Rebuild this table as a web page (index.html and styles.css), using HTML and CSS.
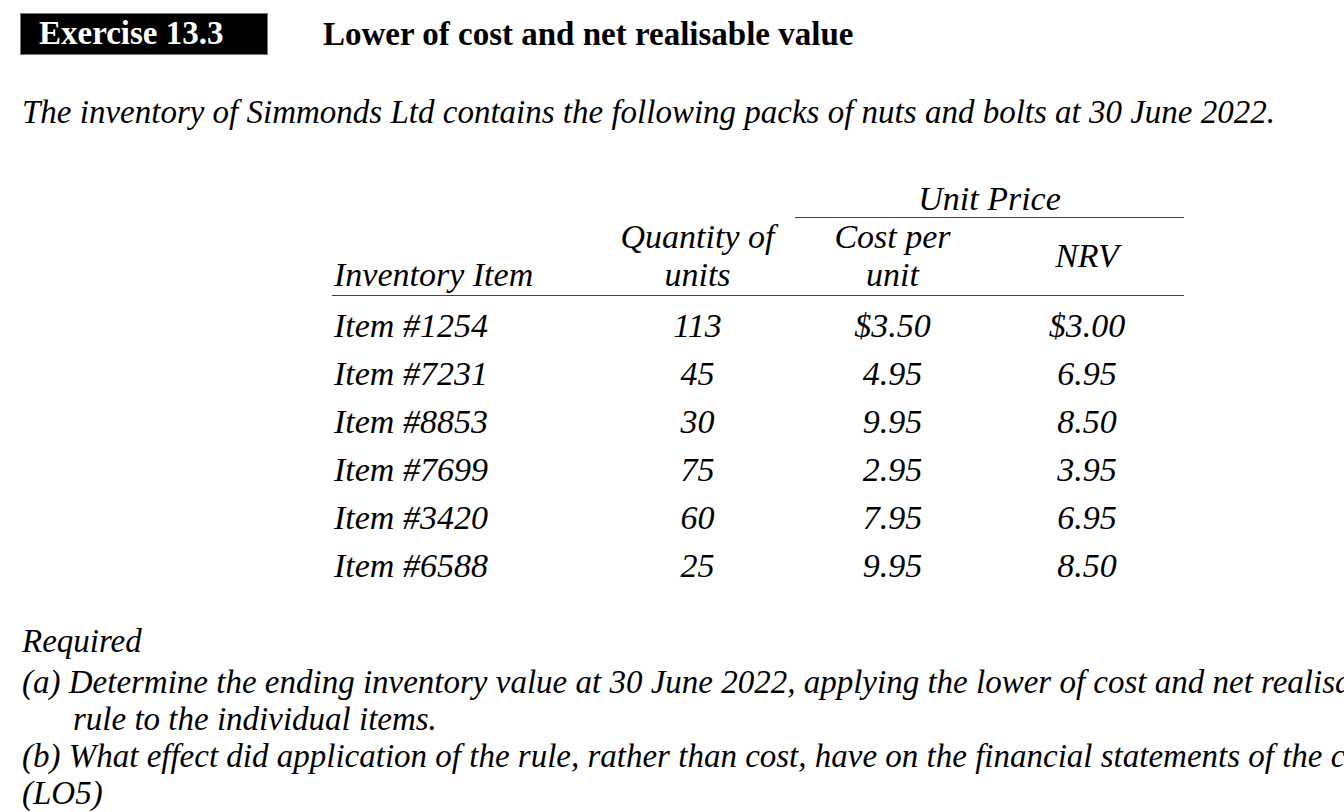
FILE: index.html
```html
<!DOCTYPE html>
<html lang="en">
<head>
<meta charset="utf-8">
<title>Exercise 13.3</title>
<link rel="stylesheet" href="styles.css">
</head>
<body>
<div class="page">
  <header class="head">
    <div class="badge">Exercise 13.3</div>
    <h1 class="title">Lower of cost and net realisable value</h1>
  </header>

  <p class="intro">The inventory of Simmonds Ltd contains the following packs of nuts and bolts at 30 June 2022.</p>

  <div class="table">
    <div class="cell span-price">Unit Price</div>

    <div class="cell hd hd-left"><span>Inventory Item</span></div>
    <div class="cell hd"><span>Quantity of<br>units</span></div>
    <div class="cell hd"><span>Cost per<br>unit</span></div>
    <div class="cell hd hd-mid"><span>NRV</span></div>

    <div class="cell item first">Item #1254</div><div class="cell num first">113</div><div class="cell num first">$3.50</div><div class="cell num first">$3.00</div>
    <div class="cell item">Item #7231</div><div class="cell num">45</div><div class="cell num">4.95</div><div class="cell num">6.95</div>
    <div class="cell item">Item #8853</div><div class="cell num">30</div><div class="cell num">9.95</div><div class="cell num">8.50</div>
    <div class="cell item">Item #7699</div><div class="cell num">75</div><div class="cell num">2.95</div><div class="cell num">3.95</div>
    <div class="cell item">Item #3420</div><div class="cell num">60</div><div class="cell num">7.95</div><div class="cell num">6.95</div>
    <div class="cell item">Item #6588</div><div class="cell num">25</div><div class="cell num">9.95</div><div class="cell num">8.50</div>
  </div>

  <div class="required">
    <p class="req-line req-head">Required</p>
    <p class="req-line hang">(a) Determine the ending inventory value at 30 June 2022, applying the lower of cost and net realisable value<br>rule to the individual items.</p>
    <p class="req-line">(b) What effect did application of the rule, rather than cost, have on the financial statements of the company?</p>
    <p class="req-line">(LO5)</p>
  </div>
</div>
</body>
</html>
```

FILE: styles.css
```css
html, body {
  margin: 0;
  padding: 0;
  background: #ffffff;
}

body {
  width: 1344px;
  height: 812px;
  overflow: hidden;
  font-family: "Liberation Serif", "Times New Roman", serif;
  color: #000000;
}

.page {
  width: 1344px;
  height: 812px;
  overflow: hidden;
  white-space: nowrap;
}

.head {
  display: flex;
  align-items: center;
  padding: 13px 0 0 20px;
}

.badge {
  box-sizing: border-box;
  width: 248px;
  height: 42px;
  background: #000000;
  border: 1px solid #7a7a7a;
  color: #ffffff;
  font-weight: bold;
  font-size: 33px;
  line-height: 38px;
  padding-left: 18px;
}

.title {
  margin: 0 0 0 55px;
  font-size: 33px;
  font-weight: bold;
  line-height: 38px;
}

.intro {
  margin: 0;
  padding: 39px 0 0 22px;
  font-style: italic;
  font-size: 33px;
  line-height: 36px;
}

.table {
  display: grid;
  grid-template-columns: 268px 195px 195px 194px;
  margin: 50px 0 0 332px;
  width: 852px;
  font-style: italic;
  font-size: 34px;
}

.cell {
  text-align: center;
}

.span-price {
  grid-column: 3 / 5;
  line-height: 37px;
  border-bottom: 1.5px solid #444444;
}

.hd {
  line-height: 38px;
  border-bottom: 1.5px solid #444444;
  display: flex;
  align-items: flex-end;
  justify-content: center;
  padding-bottom: 1px;
}

.hd-left {
  justify-content: flex-start;
  padding-left: 2px;
}

.hd-mid {
  align-items: center;
}

.item {
  text-align: left;
  padding-left: 2px;
  line-height: 48px;
}

.num {
  line-height: 48px;
}

.first {
  padding-top: 6px;
}

.required {
  padding: 33px 0 0 22px;
  font-style: italic;
  font-size: 33px;
  overflow: hidden;
}

.req-line {
  margin: 0;
  line-height: 37px;
}

.req-head {
  margin-bottom: 4px;
}

.hang {
  padding-left: 51px;
  text-indent: -51px;
}
```
